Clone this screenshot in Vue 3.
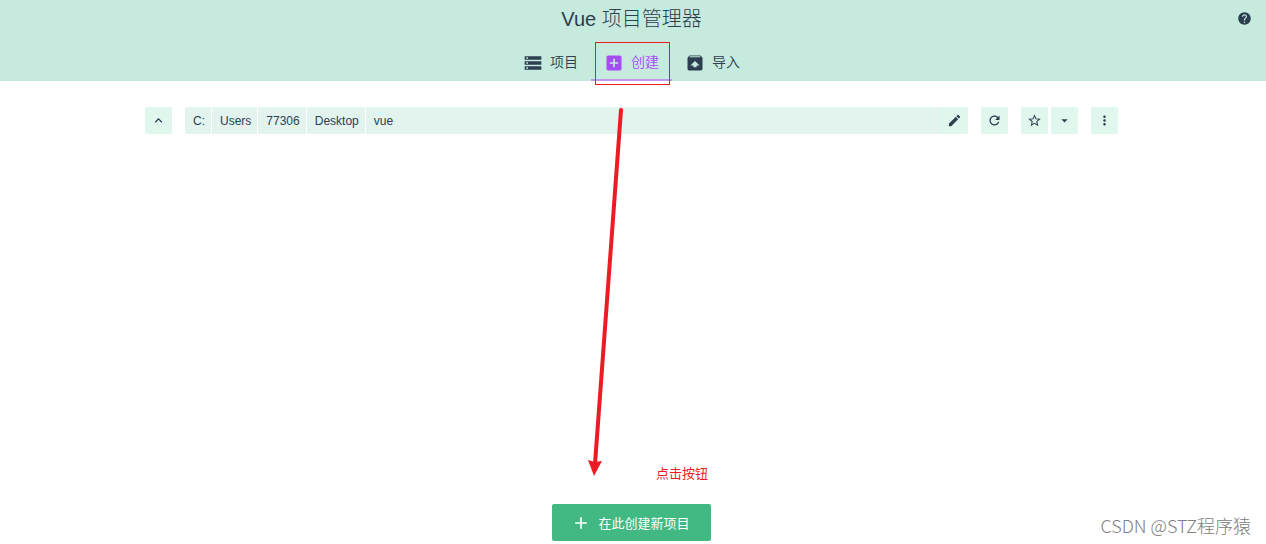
<script setup>
const icons = {
  storage: 'M2 20h20v-4H2v4zm2-3h2v2H4v-2zM2 4v4h20V4H2zm4 3H4V5h2v2zm-4 7h20v-4H2v4zm2-3h2v2H4v-2z',
  addBox: 'M19 3H5c-1.11 0-2 .9-2 2v14c0 1.1.89 2 2 2h14c1.1 0 2-.9 2-2V5c0-1.1-.9-2-2-2zm-2 10h-4v4h-2v-4H7v-2h4V7h2v4h4v2z',
  unarchive: 'M20.55 5.22l-1.39-1.68C18.88 3.21 18.47 3 18 3H6c-.47 0-.88.21-1.15.55L3.46 5.22C3.17 5.57 3 6.01 3 6.5V19c0 1.1.89 2 2 2h14c1.1 0 2-.9 2-2V6.5c0-.49-.17-.93-.45-1.28zM12 9.5l5.5 5.5H14v2h-4v-2H6.500L12 9.500zM5.120 5l.82-1h12l.93 1H5.120z',
  up: 'M12 8l-6 6 1.410 1.410L12 10.830l4.590 4.580L18 14z',
  edit: 'M3 17.250V21h3.750L17.810 9.940l-3.750-3.750L3 17.250zM20.710 7.040c.39-.39.39-1.020 0-1.410l-2.340-2.340c-.39-.39-1.020-.39-1.410 0l-1.830 1.830 3.750 3.750 1.830-1.830z',
  refresh: 'M17.650 6.350C16.200 4.900 14.210 4 12 4c-4.420 0-7.990 3.580-7.990 8s3.570 8 7.990 8c3.730 0 6.840-2.550 7.730-6h-2.080c-.82 2.330-3.040 4-5.650 4-3.310 0-6-2.690-6-6s2.690-6 6-6c1.660 0 3.140.69 4.220 1.780L13 11h7V4l-2.350 2.350z',
  star: 'M22 9.240l-7.190-.62L12 2 9.190 8.630 2 9.240l5.460 4.730L5.820 21 12 17.270 18.180 21l-1.630-7.030L22 9.240zM12 15.400l-3.760 2.270 1-4.280-3.320-2.880 4.380-.38L12 6.100l1.710 4.040 4.380.38-3.320 2.880 1 4.280L12 15.400z',
  down: 'M7 10l5 5 5-5z',
  more: 'M12 8c1.100 0 2-.9 2-2s-.9-2-2-2-2 .9-2 2 .9 2 2 2zm0 2c-1.100 0-2 .9-2 2s.9 2 2 2 2-.9 2-2-.9-2-2-2zm0 6c-1.100 0-2 .9-2 2s.9 2 2 2 2-.9 2-2-.9-2-2-2z',
  help: 'M12 2C6.480 2 2 6.480 2 12s4.480 10 10 10 10-4.480 10-10S17.520 2 12 2zm1 17h-2v-2h2v2zm2.070-7.750l-.9.92C13.450 12.900 13 13.500 13 15h-2v-.5c0-1.100.45-2.100 1.170-2.830l1.240-1.260c.37-.36.59-.86.59-1.410 0-1.100-.9-2-2-2s-2 .9-2 2H8c0-2.210 1.790-4 4-4s4 1.790 4 4c0 .88-.36 1.680-.93 2.250z',
  add: 'M19 13h-6v6h-2v-6H5v-2h6V5h2v6h6v2z',
}
const tabs = [
  { label: '项目', icon: 'storage' },
  { label: '创建', icon: 'addBox', active: true },
  { label: '导入', icon: 'unarchive' },
]
const folders = ['C:', 'Users', '77306', 'Desktop', 'vue']
</script>

<template>
  <div class="page">
    <header class="header">
      <h1 class="title">Vue 项目管理器</h1>
      <button class="help" type="button" aria-label="帮助">
        <svg class="icon small" viewBox="0 0 24 24"><path :d="icons.help" /></svg>
      </button>
      <nav class="tabs">
        <a v-for="tab in tabs" :key="tab.label" href="#" class="tab" :class="{ active: tab.active }">
          <svg class="icon large" viewBox="0 0 24 24"><path :d="icons[tab.icon]" /></svg>
          <span>{{ tab.label }}</span>
          <i v-if="tab.active" class="highlight"></i>
        </a>
      </nav>
    </header>

    <main class="main">
      <div class="toolbar">
        <button class="tool" type="button" aria-label="上级目录">
          <svg class="icon small" viewBox="0 0 24 24"><path :d="icons.up" /></svg>
        </button>
        <div class="path">
          <button v-for="folder in folders" :key="folder" class="folder" type="button">{{ folder }}</button>
          <span class="rest"></span>
          <button class="tool edit" type="button" aria-label="编辑路径">
            <svg class="icon small" viewBox="0 0 24 24"><path :d="icons.edit" /></svg>
          </button>
        </div>
        <button class="tool" type="button" aria-label="刷新">
          <svg class="icon small" viewBox="0 0 24 24"><path :d="icons.refresh" /></svg>
        </button>
        <div class="favorites">
          <button class="tool" type="button" aria-label="收藏">
            <svg class="icon small" viewBox="0 0 24 24"><path :d="icons.star" /></svg>
          </button>
          <button class="tool" type="button" aria-label="收藏列表">
            <svg class="icon small" viewBox="0 0 24 24"><path :d="icons.down" /></svg>
          </button>
        </div>
        <button class="tool" type="button" aria-label="更多">
          <svg class="icon small" viewBox="0 0 24 24"><path :d="icons.more" /></svg>
        </button>
      </div>
    </main>

    <footer class="footer">
      <button class="create" type="button">
        <svg class="icon large" viewBox="0 0 24 24"><path :d="icons.add" /></svg>
        <span>在此创建新项目</span>
      </button>
    </footer>

    <svg class="arrow" viewBox="0 0 40 372" aria-hidden="true">
      <path d="M32 4L6 358" />
      <polygon points="5,370 -1,354 6,356 13,355" />
    </svg>
    <span class="note">点击按钮</span>
    <span class="watermark">CSDN @STZ程序猿</span>
  </div>
</template>

<style>
body {
  margin: 0;
}
</style>

<style scoped>
.page {
  position: relative;
  display: flex;
  flex-direction: column;
  min-height: 100vh;
  overflow: hidden;
  background: #fff;
  color: #2c3e50;
  font-family: "Liberation Sans", "Noto Sans CJK SC", sans-serif;
  font-size: 13px;
}
button {
  border: 0;
  padding: 0;
  font: inherit;
  color: inherit;
  cursor: pointer;
}
.icon {
  display: block;
  flex: none;
  fill: currentColor;
}
.small {
  width: 15px;
  height: 15px;
}
.large {
  width: 20px;
  height: 20px;
}
.header {
  position: relative;
  padding-right: 3px;
  background: #c6ebde;
}
.title {
  margin: 0;
  font-size: 20px;
  font-weight: 300;
  line-height: 38px;
  text-align: center;
}
.help {
  position: absolute;
  top: 11px;
  right: 14px;
  background: none;
}
.tabs {
  display: flex;
  justify-content: center;
  padding-top: 6px;
}
.tab {
  position: relative;
  display: flex;
  align-items: center;
  gap: 7px;
  height: 37px;
  padding: 0 13px;
  color: #2c3e50;
  font-size: 14px;
  font-weight: 350;
  line-height: 20px;
  text-decoration: none;
}
.tab span {
  padding-bottom: 1px;
}
.tab.active {
  color: #a64bf6;
}
.tab.active::after {
  content: "";
  position: absolute;
  left: 0;
  right: 0;
  bottom: 0;
  height: 2px;
  background: #c494ef;
}
.highlight {
  position: absolute;
  z-index: 1;
  top: -2px;
  bottom: -4px;
  left: 4px;
  right: 2px;
  border: 1px solid #ee1c20;
}
.main {
  flex: 1;
  padding: 26px 148px 0 145px;
}
.toolbar {
  display: flex;
  gap: 13px;
}
.tool {
  display: flex;
  flex: none;
  align-items: center;
  justify-content: center;
  width: 27px;
  height: 27px;
  border-radius: 2px;
  background: #e0f7ed;
}
.path {
  display: flex;
  flex: 1;
  gap: 1px;
  height: 27px;
  overflow: hidden;
  border-radius: 2px;
  background: #fff;
}
.folder {
  padding: 0 6px 0 8px;
  background: #e3f4ee;
  font-size: 12px;
}
.rest {
  flex: 1;
  margin-left: -1px;
  margin-right: -1px;
  background: #e3f4ee;
}
.edit {
  border-radius: 0;
}
.favorites {
  display: flex;
  gap: 3px;
}
.footer {
  display: flex;
  justify-content: center;
  padding: 0 3px 3px 0;
}
.create {
  display: flex;
  align-items: center;
  justify-content: center;
  gap: 7px;
  width: 159px;
  height: 37px;
  padding-right: 2px;
  border-radius: 2px;
  background: #42b983;
  color: #fff;
}
.arrow {
  position: absolute;
  top: 106px;
  left: calc(50% - 44px);
  width: 40px;
  height: 372px;
  overflow: visible;
  pointer-events: none;
}
.arrow path {
  fill: none;
  stroke: #ed1c24;
  stroke-width: 4;
  stroke-linecap: round;
}
.arrow polygon {
  fill: #ed1c24;
}
.note {
  position: absolute;
  left: calc(50% + 23px);
  bottom: 60px;
  color: #ed1c24;
  line-height: 20px;
}
.watermark {
  position: absolute;
  right: 15px;
  bottom: 7px;
  color: #808080;
  font-family: "Noto Sans CJK SC", sans-serif;
  font-size: 18px;
  font-weight: 300;
  line-height: 24px;
}
</style>
